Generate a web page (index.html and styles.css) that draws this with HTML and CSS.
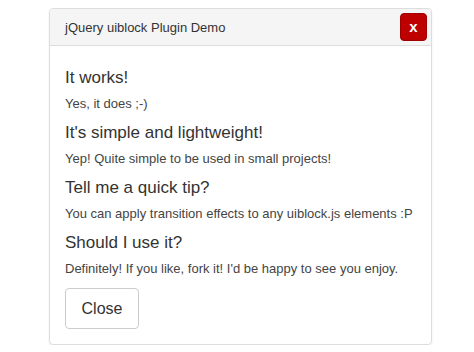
FILE: index.html
```html
<!DOCTYPE html>
<html lang="en">
<head>
    <meta charset="UTF-8">
    <title>jQuery uiblock Plugin Demo</title>
    <link rel="stylesheet" href="styles.css">
</head>
<body>
    <section class="panel">
        <header class="panel-head">
            <span class="title">jQuery uiblock Plugin Demo</span>
            <button class="btn-x">x</button>
        </header>
        <div class="panel-body">
            <h4>It works!</h4>
            <p>Yes, it does ;-)</p>
            <h4>It's simple and lightweight!</h4>
            <p>Yep! Quite simple to be used in small projects!</p>
            <h4>Tell me a quick tip?</h4>
            <p>You can apply transition effects to any uiblock.js elements :P</p>
            <h4>Should I use it?</h4>
            <p>Definitely! If you like, fork it! I'd be happy to see you enjoy.</p>
            <button class="btn-close">Close</button>
        </div>
    </section>
</body>
</html>
```

FILE: styles.css
```css
* {
    margin: 0;
    padding: 0;
    box-sizing: border-box;
}
body {
    background: #fff;
    font-family: "Liberation Sans", Arial, sans-serif;
    color: #333;
    padding: 8px 0 0 49px;
}
.panel {
    width: 383px;
    border: 1px solid #ddd;
    border-radius: 4px;
    box-shadow: 0 1px 2px rgba(0, 0, 0, 0.08);
    overflow: hidden;
}
.panel-head {
    display: flex;
    align-items: center;
    justify-content: space-between;
    padding: 4px 4px 4px 15px;
    background-color: #f5f5f5;
    border-bottom: 1px solid #ddd;
}
.title {
    font-size: 13px;
    color: #333;
}
.btn-x {
    width: 27px;
    height: 28px;
    background-color: #bd0000;
    border: 1px solid #a00000;
    border-radius: 4px;
    color: #fff;
    font-family: "Liberation Sans", Arial, sans-serif;
    font-weight: bold;
    font-size: 15px;
    line-height: 24px;
    cursor: pointer;
}
.panel-body {
    padding: 22px 15px 15px;
}
.panel-body h4 {
    font-size: 17px;
    font-weight: normal;
    line-height: 20px;
    color: #333;
}
.panel-body p {
    font-size: 13px;
    line-height: 18px;
    color: #444;
    margin: 7px 0 10px;
}
.btn-close {
    display: block;
    width: 74px;
    height: 41px;
    background: #fff;
    border: 1px solid #ccc;
    border-radius: 4px;
    font-family: "Liberation Sans", Arial, sans-serif;
    font-size: 16px;
    color: #333;
    cursor: pointer;
}
```
